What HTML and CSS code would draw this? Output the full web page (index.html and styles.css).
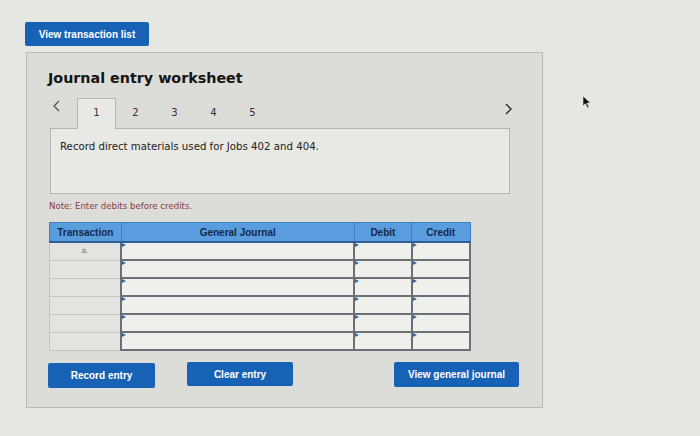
FILE: index.html
```html
<!DOCTYPE html>
<html>
<head>
<meta charset="utf-8">
<link rel="stylesheet" href="styles.css">
</head>
<body>
<button class="btn top-btn">View transaction list</button>
<div class="panel">
  <h1 class="title">Journal entry worksheet</h1>
  <div class="tabs">
    <span class="nav prev"><svg width="8" height="12" viewBox="0 0 8 12"><polyline points="7,1 2,6 7,11" fill="none" stroke="#555" stroke-width="1.3"/></svg></span>
    <span class="tab active">1</span>
    <span class="tab">2</span>
    <span class="tab">3</span>
    <span class="tab">4</span>
    <span class="tab">5</span>
    <span class="nav next"><svg width="8" height="12" viewBox="0 0 8 12"><polyline points="1,1 6,6 1,11" fill="none" stroke="#333" stroke-width="1.5"/></svg></span>
  </div>
  <div class="task">Record direct materials used for Jobs 402 and 404.</div>
  <p class="note">Note: Enter debits before credits.</p>
  <table class="journal">
    <thead>
      <tr><th class="c-tx">Transaction</th><th class="c-gj">General Journal</th><th class="c-dr">Debit</th><th class="c-cr">Credit</th></tr>
    </thead>
    <tbody>
      <tr><td class="tx">a.</td><td class="in"></td><td class="in"></td><td class="in"></td></tr>
      <tr><td class="tx"></td><td class="in"></td><td class="in"></td><td class="in"></td></tr>
      <tr><td class="tx"></td><td class="in"></td><td class="in"></td><td class="in"></td></tr>
      <tr><td class="tx"></td><td class="in"></td><td class="in"></td><td class="in"></td></tr>
      <tr><td class="tx"></td><td class="in"></td><td class="in"></td><td class="in"></td></tr>
      <tr><td class="tx"></td><td class="in"></td><td class="in"></td><td class="in"></td></tr>
    </tbody>
  </table>
  <div class="actions">
    <button class="btn act-record">Record entry</button>
    <button class="btn act-clear">Clear entry</button>
    <button class="btn act-view">View general journal</button>
  </div>
</div>
<svg class="cursor" width="10" height="14" viewBox="0 0 10 14"><path d="M1 1 L1 11 L3.5 8.6 L5.5 13 L7 12.3 L5 8 L8.5 8 Z" fill="#111" stroke="#eee" stroke-width="0.6"/></svg>
</body>
</html>
```

FILE: styles.css
```css
html, body {
  margin: 0;
  padding: 0;
}
body {
  background: #e6e6e2;
  padding: 22px 0 0 25px;
  font-family: "DejaVu Sans", Verdana, sans-serif;
  width: 675px;
  height: 414px;
  position: relative;
  overflow: hidden;
}
.btn {
  display: block;
  background: #1862b5;
  color: #fff;
  border: none;
  border-radius: 2px;
  font-family: "Liberation Sans", Arial, sans-serif;
  font-weight: bold;
  font-size: 10px;
  padding: 0;
  margin: 0;
  cursor: pointer;
}
.top-btn {
  width: 124px;
  height: 24px;
}
.panel {
  box-sizing: border-box;
  margin: 6px 0 0 1px;
  width: 517px;
  border: 1px solid #b8b8b4;
  background: #dcdcd8;
  padding: 16px 22px 19px 21px;
}
.title {
  margin: 0;
  font-size: 14.3px;
  line-height: 19px;
  font-weight: bold;
  color: #151515;
}
.tabs {
  margin-top: 10px;
  height: 30px;
  display: flex;
  align-items: stretch;
}
.nav {
  display: flex;
}
.prev {
  width: 29px;
  padding-left: 4px;
  box-sizing: border-box;
  align-items: flex-start;
  padding-top: 2px;
}
.next {
  margin-left: auto;
  padding-right: 7px;
  padding-top: 5px;
  align-items: flex-start;
}
.tab {
  width: 39px;
  box-sizing: border-box;
  display: flex;
  align-items: center;
  justify-content: center;
  padding-bottom: 2px;
  font-size: 10px;
  color: #333;
}
.tab.active {
  background: #e8e8e4;
  border: 1px solid #b4b4b0;
  border-bottom: none;
  position: relative;
  z-index: 1;
  height: 31px;
  padding-bottom: 3px;
}
.task {
  box-sizing: border-box;
  margin-left: 2px;
  width: 460px;
  height: 66px;
  background: #e8e8e4;
  border: 1px solid #b4b4b0;
  padding: 12px 9px;
  font-size: 10.2px;
  line-height: 12px;
  color: #222;
}
.note {
  margin: 7px 0 0 1px;
  font-size: 8.6px;
  line-height: 10px;
  color: #8a3b3b;
}
.journal {
  margin: 11px 0 0 1px;
  border-collapse: collapse;
  width: 422px;
  font-family: "Liberation Sans", Arial, sans-serif;
}
.journal th {
  height: 18px;
  padding: 0;
  background: #5a9ddf;
  color: #13294b;
  font-size: 10px;
  font-weight: bold;
  border: 1px solid #3f7fc0;
  border-bottom: 2px solid #2f5f92;
}
.c-tx { width: 71px; }
.c-gj { width: 236px; }
.c-dr { width: 57px; }
.c-cr { width: 58px; }
.journal td {
  height: 16px;
  padding: 0;
  position: relative;
}
.journal td.tx {
  border: 1px solid #c4c4c0;
  border-right: 2px solid #6c7075;
  background: #e3e3df;
  text-align: center;
  font-family: "DejaVu Sans", Verdana, sans-serif;
  font-size: 7.5px;
  color: #777;
  vertical-align: top;
  padding-top: 3px;
  height: 13px;
}
.journal td.in {
  border: 2px solid #6c7075;
  background: #efefec;
}
.journal td.in::before {
  content: "";
  position: absolute;
  left: 0;
  top: 0;
  border-left: 4px solid #2f63a8;
  border-top: 2px solid transparent;
  border-bottom: 2px solid transparent;
}
.actions {
  margin-top: 12px;
  display: flex;
  align-items: flex-start;
}
.act-record {
  width: 107px;
  height: 25px;
}
.act-clear {
  margin-left: 32px;
  width: 106px;
  height: 24px;
  margin-top: -1px;
}
.act-view {
  margin-left: auto;
  margin-right: 1px;
  width: 125px;
  height: 25px;
  margin-top: -1px;
}
.cursor {
  position: absolute;
  left: 582px;
  top: 95px;
}
```
